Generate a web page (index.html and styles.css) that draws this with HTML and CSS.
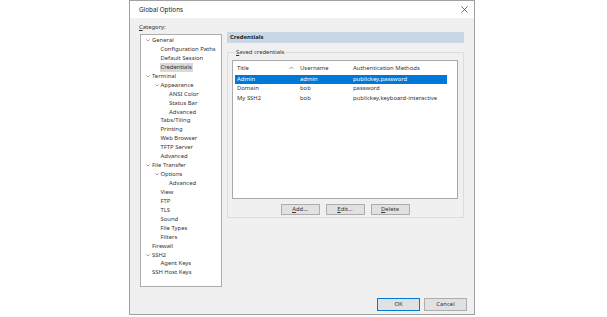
FILE: index.html
```html
<!DOCTYPE html>
<html>
<head>
<meta charset="utf-8">
<link rel="stylesheet" href="styles.css">
</head>
<body>
<div class="dialog">
  <div class="titlebar">
    <span class="title">Global Options</span>
    <svg class="close" width="8" height="8" viewBox="0 0 8 8"><path d="M0.5 0.5 L7.5 7.5 M7.5 0.5 L0.5 7.5" stroke="#333" stroke-width="0.8" fill="none"/></svg>
  </div>
  <div class="body">
    <div class="main">
      <div class="left">
        <div class="cat-label"><u>C</u>ategory:</div>
        <div class="tree">
          <div class="row l0"><svg class="chev" viewBox="0 0 5 3"><path d="M0.4 0.4 L2.5 2.5 L4.6 0.4" stroke="#555" stroke-width="0.7" fill="none"/></svg>General</div>
          <div class="row l1">Configuration Paths</div>
          <div class="row l1">Default Session</div>
          <div class="row l1"><span class="sel">Credentials</span></div>
          <div class="row l0"><svg class="chev" viewBox="0 0 5 3"><path d="M0.4 0.4 L2.5 2.5 L4.6 0.4" stroke="#555" stroke-width="0.7" fill="none"/></svg>Terminal</div>
          <div class="row l1"><svg class="chev" viewBox="0 0 5 3"><path d="M0.4 0.4 L2.5 2.5 L4.6 0.4" stroke="#555" stroke-width="0.7" fill="none"/></svg>Appearance</div>
          <div class="row l2">ANSI Color</div>
          <div class="row l2">Status Bar</div>
          <div class="row l2">Advanced</div>
          <div class="row l1">Tabs/Tiling</div>
          <div class="row l1">Printing</div>
          <div class="row l1">Web Browser</div>
          <div class="row l1">TFTP Server</div>
          <div class="row l1">Advanced</div>
          <div class="row l0"><svg class="chev" viewBox="0 0 5 3"><path d="M0.4 0.4 L2.5 2.5 L4.6 0.4" stroke="#555" stroke-width="0.7" fill="none"/></svg>File Transfer</div>
          <div class="row l1"><svg class="chev" viewBox="0 0 5 3"><path d="M0.4 0.4 L2.5 2.5 L4.6 0.4" stroke="#555" stroke-width="0.7" fill="none"/></svg>Options</div>
          <div class="row l2">Advanced</div>
          <div class="row l1">View</div>
          <div class="row l1">FTP</div>
          <div class="row l1">TLS</div>
          <div class="row l1">Sound</div>
          <div class="row l1">File Types</div>
          <div class="row l1">Filters</div>
          <div class="row l0">Firewall</div>
          <div class="row l0"><svg class="chev" viewBox="0 0 5 3"><path d="M0.4 0.4 L2.5 2.5 L4.6 0.4" stroke="#555" stroke-width="0.7" fill="none"/></svg>SSH2</div>
          <div class="row l1">Agent Keys</div>
          <div class="row l0">SSH Host Keys</div>
        </div>
      </div>
      <div class="right">
        <div class="header">Credentials</div>
        <fieldset class="group">
          <legend><u>S</u>aved credentials</legend>
          <div class="list">
            <div class="lrow lhead">
              <span class="c1">Title<svg class="sort" viewBox="0 0 6 4"><path d="M0.6 3.4 L3 1 L5.4 3.4" stroke="#666" stroke-width="0.8" fill="none"/></svg></span>
              <span class="c2">Username</span>
              <span class="c3">Authentication Methods</span>
            </div>
            <div class="lrow selected">
              <span class="c1">Admin</span><span class="c2">admin</span><span class="c3">publickey,password</span>
            </div>
            <div class="lrow">
              <span class="c1">Domain</span><span class="c2">bob</span><span class="c3">password</span>
            </div>
            <div class="lrow">
              <span class="c1">My SSH2</span><span class="c2">bob</span><span class="c3">publickey,keyboard-interactive</span>
            </div>
          </div>
          <div class="btns">
            <button class="btn"><u>A</u>dd...</button>
            <button class="btn"><u>E</u>dit...</button>
            <button class="btn"><u>D</u>elete</button>
          </div>
        </fieldset>
      </div>
    </div>
    <div class="footer">
      <button class="btn big default">OK</button>
      <button class="btn big">Cancel</button>
    </div>
  </div>
</div>
</body>
</html>
```

FILE: styles.css
```css
html, body {
  margin: 0;
  padding: 0;
  background: #ffffff;
}
body {
  font-family: "Noto Sans", "Open Sans", sans-serif;
  font-size: 5.9px;
  color: #333333;
}
.dialog {
  margin-left: 129px;
  width: 346px;
  height: 315px;
  box-sizing: border-box;
  border: 1px solid #a0a0a0;
  display: flex;
  flex-direction: column;
  background: #f0f0f0;
}
.titlebar {
  height: 17px;
  background: #ffffff;
  display: flex;
  align-items: center;
  justify-content: space-between;
  padding: 0 6px 0 9px;
  flex: none;
}
.title {
  font-size: 6.3px;
  color: #222;
}
.close {
  width: 7px;
  height: 7px;
}
.body {
  flex: 1;
  display: flex;
  flex-direction: column;
}
.main {
  display: flex;
  padding: 0 10px 0 9px;
  gap: 5px;
  flex: none;
}
.left {
  display: flex;
  flex-direction: column;
  padding-top: 5px;
}
.cat-label {
  height: 9px;
  line-height: 9px;
  margin-bottom: 2px;
}
.tree {
  margin-left: 1px;
  width: 82px;
  height: 253px;
  box-sizing: border-box;
  border: 1px solid #adadad;
  background: #fff;
  padding-top: 1px;
}
.row {
  height: 8.95px;
  line-height: 8.95px;
  white-space: nowrap;
  display: flex;
  align-items: center;
}
.row.l0 { padding-left: 11px; }
.row.l1 { padding-left: 19.5px; }
.row.l2 { padding-left: 28px; }
.chev {
  width: 4px;
  height: 2.5px;
  margin-left: -6px;
  margin-right: 2px;
}
.sel {
  background: #d9d9d9;
  padding: 0 1px;
  margin-left: -1px;
}
.right {
  width: 237px;
  padding-top: 14px;
  display: flex;
  flex-direction: column;
}
.header {
  height: 11px;
  line-height: 11px;
  background: #c9d6e4;
  font-weight: bold;
  padding-left: 3px;
  color: #1a1a1a;
}
.group {
  margin: 5px 0 0 0;
  padding: 3px 5px 2px 4px;
  border: 1px solid #dcdcdc;
  min-inline-size: 0;
}
.group legend {
  padding: 0 1px;
  margin-left: 3px;
  line-height: 9px;
  height: 9px;
}
.list {
  width: 226px;
  height: 139px;
  box-sizing: border-box;
  border: 1px solid #a9a9a9;
  background: #fff;
  padding: 1px 0 0 2px;
}
.lrow {
  display: flex;
  height: 9.3px;
  line-height: 9.3px;
  white-space: nowrap;
  width: 212px;
}
.lrow.lhead {
  height: 12px;
  line-height: 12px;
  margin-bottom: 1px;
}
.lrow.selected {
  background: #0078d7;
  color: #fff;
}
.c1 {
  width: 62px;
  padding-left: 2px;
  box-sizing: border-box;
  display: flex;
  align-items: center;
}
.c2 {
  width: 54px;
  padding-left: 3px;
  box-sizing: border-box;
}
.c3 {
  width: 96px;
  padding-left: 2px;
  box-sizing: border-box;
}
.sort {
  width: 5px;
  height: 3.5px;
  margin-left: auto;
  margin-right: 3px;
}
.btns {
  display: flex;
  justify-content: center;
  gap: 6px;
  margin-top: 5px;
}
.btn {
  font-family: "Noto Sans", "Open Sans", sans-serif;
  font-size: 5.9px;
  color: #333333;
  width: 39px;
  height: 11px;
  padding: 0;
  line-height: 9px;
  background: #e1e1e1;
  border: 1px solid #adadad;
  border-radius: 0;
}
.footer {
  display: flex;
  justify-content: flex-end;
  gap: 4px;
  padding: 0 7px 0 0;
  margin-top: auto;
  margin-bottom: 3px;
}
.btn.big {
  width: 43px;
  height: 13px;
  line-height: 11px;
}
.btn.default {
  border-color: #0078d7;
}
```
